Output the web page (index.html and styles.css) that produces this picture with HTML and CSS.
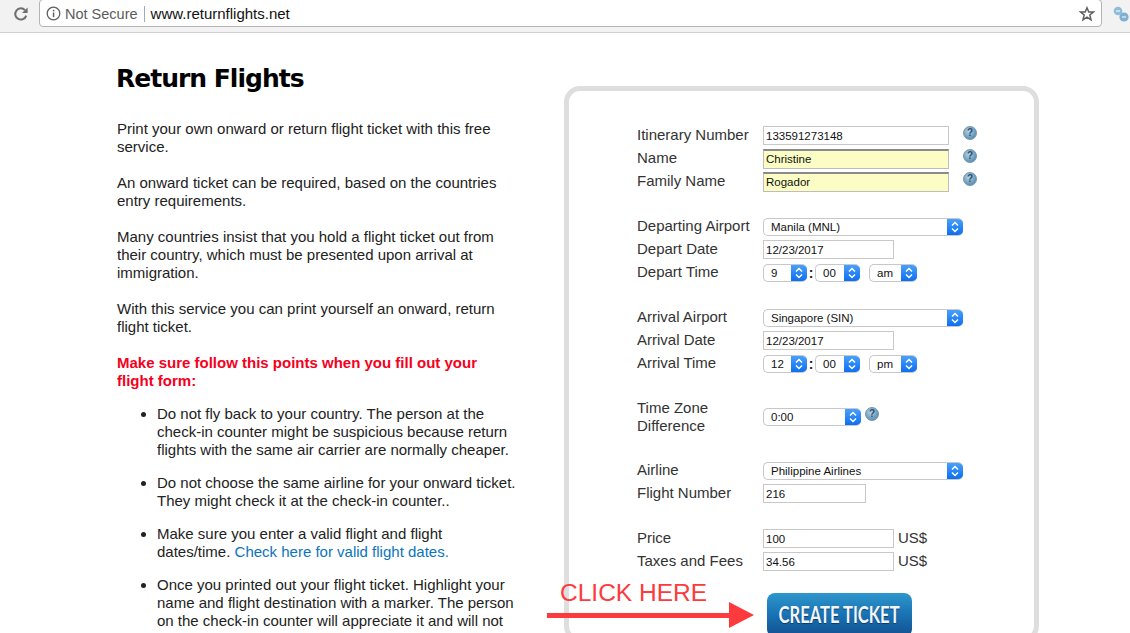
FILE: index.html
```html
<!DOCTYPE html>
<html lang="en">
<head>
<meta charset="utf-8">
<title>Return Flights</title>
<link rel="stylesheet" href="styles.css">
</head>
<body>
<svg class="defs" width="0" height="0" aria-hidden="true">
  <symbol id="updown" viewBox="0 0 16 18">
    <path d="M5 7.500 8 4.500 11 7.500M5 10.500 8 13.500 11 10.500" fill="none" stroke="#fff" stroke-width="1.500"/>
  </symbol>
</svg>
<header class="toolbar">
  <svg class="reload" width="16" height="16" viewBox="0 0 16 16"><path d="M13.200 9.600A5.600 5.600 0 1 1 12 4.200" fill="none" stroke="#6e6e6e" stroke-width="2"/><path d="M14.600 1.400V7H9z" fill="#6e6e6e"/></svg>
  <div class="omnibox">
    <svg class="info" width="15" height="15" viewBox="0 0 15 15"><circle cx="7.500" cy="7.500" r="6.300" fill="none" stroke="#5f5f5f" stroke-width="1.300"/><rect x="6.800" y="6.500" width="1.500" height="4.600" fill="#5f5f5f"/><rect x="6.800" y="3.800" width="1.500" height="1.600" fill="#5f5f5f"/></svg>
    <span class="secure">Not Secure</span>
    <span class="sep"></span>
    <span class="url">www.returnflights.net</span>
    <svg class="star" width="16" height="16" viewBox="0 0 16 16"><path d="M8 1.800 9.800 6H14.400L10.800 9 12 13.900 8 11.200 4 13.900 5.200 9 1.600 6H6.200z" fill="none" stroke="#5f5f5f" stroke-width="1.500"/></svg>
  </div>
  <svg class="ext" width="16" height="16" viewBox="0 0 16 16"><circle cx="5" cy="5" r="4.300" fill="#8fbcd8"/><circle cx="11" cy="11" r="4.600" fill="#7fb0d2"/><path d="M3 5h4M9 11h4" stroke="#fff" stroke-width="1.200"/></svg>
</header>

<main class="page">
  <section class="intro">
    <h1>Return Flights</h1>
    <p>Print your own onward or return flight ticket with this free service.</p>
    <p>An onward ticket can be required, based on the countries entry requirements.</p>
    <p>Many countries insist that you hold a flight ticket out from their country, which must be presented upon arrival at immigration.</p>
    <p>With this service you can print yourself an onward, return flight ticket.</p>
    <p class="warn">Make sure follow this points when you fill out your flight form:</p>
    <ul>
      <li>Do not fly back to your country. The person at the check-in counter might be suspicious because return flights with the same air carrier are normally cheaper.</li>
      <li>Do not choose the same airline for your onward ticket. They might check it at the check-in counter..</li>
      <li>Make sure you enter a valid flight and flight dates/time. <a href="#">Check here for valid flight dates.</a></li>
      <li>Once you printed out your flight ticket. Highlight your name and flight destination with a marker. The person on the check-in counter will appreciate it and will not</li>
    </ul>
  </section>

  <form class="card">
    <div class="group">
      <div class="row"><label>Itinerary Number</label><input class="w-full" value="133591273148"><span class="help">?</span></div>
      <div class="row"><label>Name</label><input class="w-full hl" value="Christine"><span class="help">?</span></div>
      <div class="row"><label>Family Name</label><input class="w-full hl" value="Rogador"><span class="help">?</span></div>
    </div>
    <div class="group">
      <div class="row"><label>Departing Airport</label><div class="select s-wide"><span>Manila (MNL)</span><svg class="arrow"><use href="#updown"/></svg></div></div>
      <div class="row"><label>Depart Date</label><input class="w-date" value="12/23/2017"></div>
      <div class="row"><label>Depart Time</label>
        <div class="select s-h"><span>9</span><svg class="arrow"><use href="#updown"/></svg></div><b class="colon">:</b>
        <div class="select s-m"><span>00</span><svg class="arrow"><use href="#updown"/></svg></div>
        <div class="select s-ap"><span>am</span><svg class="arrow"><use href="#updown"/></svg></div>
      </div>
    </div>
    <div class="group">
      <div class="row"><label>Arrival Airport</label><div class="select s-wide"><span>Singapore (SIN)</span><svg class="arrow"><use href="#updown"/></svg></div></div>
      <div class="row"><label>Arrival Date</label><input class="w-date" value="12/23/2017"></div>
      <div class="row"><label>Arrival Time</label>
        <div class="select s-h"><span>12</span><svg class="arrow"><use href="#updown"/></svg></div><b class="colon">:</b>
        <div class="select s-m"><span>00</span><svg class="arrow"><use href="#updown"/></svg></div>
        <div class="select s-ap"><span>pm</span><svg class="arrow"><use href="#updown"/></svg></div>
      </div>
    </div>
    <div class="group">
      <div class="row tall"><label class="label-two">Time Zone<br>Difference</label><div class="select s-tz"><span>0:00</span><svg class="arrow"><use href="#updown"/></svg></div><span class="help help-near">?</span></div>
    </div>
    <div class="group">
      <div class="row"><label>Airline</label><div class="select s-wide"><span>Philippine Airlines</span><svg class="arrow"><use href="#updown"/></svg></div></div>
      <div class="row"><label>Flight Number</label><input class="w-num" value="216"></div>
    </div>
    <div class="group">
      <div class="row"><label>Price</label><input class="w-date" value="100"><span class="unit">US$</span></div>
      <div class="row"><label>Taxes and Fees</label><input class="w-date" value="34.56"><span class="unit">US$</span></div>
    </div>
    <button type="button" class="create"><span>CREATE TICKET</span></button>
  </form>
</main>

<div class="note">
  <span class="note-text">CLICK HERE</span>
  <svg class="note-arrow" width="207" height="26" viewBox="0 0 207 26"><path d="M0 11h182V0l25 13-25 13V16H0z" fill="#fd3a3c"/></svg>
</div>
</body>
</html>
```
FILE: styles.css
```css
* { box-sizing: border-box; }
html, body { height: 100%; }
body {
  margin: 0;
  overflow: hidden;
  background: #fff;
  color: #222;
  font-family: "Liberation Sans", Arial, sans-serif;
  font-size: 15px;
  line-height: 18px;
  position: relative;
}
.defs { position: absolute; }

/* browser chrome */
.toolbar {
  height: 33px;
  display: flex;
  align-items: flex-start;
  background: #f2f2f2;
  border-bottom: 1px solid #d0d0d0;
}
.reload { margin: 6px 10px 0 13px; flex: none; }
.omnibox {
  width: 1063px;
  height: 28px;
  margin-top: -1px;
  display: flex;
  align-items: center;
  padding: 1px 7px 0 6px;
  background: #fff;
  border: 1px solid #b4b4b4;
  border-radius: 4px;
}
.secure { margin-left: 4px; color: #5c5c5c; font-size: 14.5px; }
.sep { width: 1px; height: 16px; background: #a8a8a8; margin: 0 6px; }
.url { color: #111; font-size: 15px; }
.star { margin-left: auto; margin-right: -1px; }
.ext { margin: 6px 0 0 11px; flex: none; }

/* page */
.page {
  display: flex;
  align-items: flex-start;
  padding: 0 0 0 117px;
  gap: 48px;
}
.intro { width: 399px; flex: none; }
h1 {
  margin: 30px 0 25px -1px;
  font-family: "DejaVu Sans", sans-serif;
  font-size: 25px;
  letter-spacing: -1px;
  line-height: 32px;
  font-weight: 700;
  color: #000;
}
.intro p { margin: 0 0 18px; }
.intro .warn { color: #f5001d; font-weight: 700; margin-bottom: 15px; }
ul { margin: 0; padding: 0 0 0 40px; }
li { margin: 0 0 15px; }
a { color: #0b74bd; text-decoration: none; }

/* form card */
.card {
  width: 475px;
  flex: none;
  margin-top: 53px;
  padding: 33px 0 0 68px;
  border: 5px solid #dedede;
  border-radius: 16px;
  background: #fff;
}
.group { margin-bottom: 22px; }
.row { display: flex; align-items: center; height: 23px; }
.row.tall { height: 40px; }
label { width: 126px; flex: none; color: #333; padding-bottom: 2px; }
label.label-two { padding-bottom: 0; }
input {
  height: 19px;
  padding: 0 2px;
  border: 1px solid #c8c8c8;
  background: #fff;
  color: #111;
  font: 11.5px "Liberation Sans", Arial, sans-serif;
  border-radius: 0;
  outline: 0;
}
input.hl { height: 20px; background: #fbfdc4; border-top: 2px solid #8a8a8a; border-color: #8a8a8a #bdbdbd #bdbdbd #bdbdbd; }
.w-full { width: 186px; }
.w-date { width: 131px; }
.w-num { width: 103px; }
.unit { margin-left: 4px; color: #333; padding-bottom: 2px; }

.select {
  height: 18px;
  display: flex;
  align-items: center;
  justify-content: space-between;
  padding-left: 7px;
  background: #fff;
  border: 1px solid #c8c8c8;
  border-right: 0;
  border-radius: 5px;
  font-size: 11.5px;
  color: #111;
  overflow: hidden;
  flex: none;
}
.arrow {
  width: 16px;
  height: 18px;
  margin: -1px 0;
  flex: none;
  background: linear-gradient(#4da3fb, #0a6bee);
}
.s-wide { width: 200px; }
.s-h { width: 44px; }
.s-m { width: 45px; }
.s-ap { width: 48px; margin-left: 9px; }
.s-tz { width: 98px; }
.colon { width: 8px; text-align: center; font-weight: 700; font-size: 14px; color: #222; }

.help {
  width: 14px;
  height: 14px;
  margin: -6px 0 0 14px;
  flex: none;
  border-radius: 50%;
  background: radial-gradient(circle at 40% 35%, #b9d3e6, #4f86ad 85%);
  border: 1px solid #7396ae;
  color: #27506e;
  font-size: 10px;
  line-height: 12px;
  font-weight: 700;
  text-align: center;
}
.help-near { margin: -6px 0 0 4px; }

.create {
  display: flex;
  justify-content: center;
  width: 145px;
  height: 44px;
  margin: -2px 0 0 130px;
  padding: 0;
  border: 0;
  border-radius: 8px;
  background: linear-gradient(#2f97cd 0, #1a75b6 45%, #124f8e 100%);
  color: #f2f6fa;
  font-family: Lato, "Liberation Sans", sans-serif;
  font-size: 23px;
  font-weight: 700;
  line-height: 42px;
  white-space: nowrap;
  overflow: hidden;
}
.create span {
  flex: none;
  transform: scaleX(.72);
  text-shadow: 0 1px 1px #0b3c6e;
}

/* annotation lying over the page */
.note { position: absolute; left: 547px; top: 578px; }
.note-text {
  display: block;
  margin-left: 13px;
  color: #fd3a3c;
  font-size: 24.500px;
  line-height: 29px;
  white-space: nowrap;
}
.note-arrow { display: block; margin-top: -5px; }
```
